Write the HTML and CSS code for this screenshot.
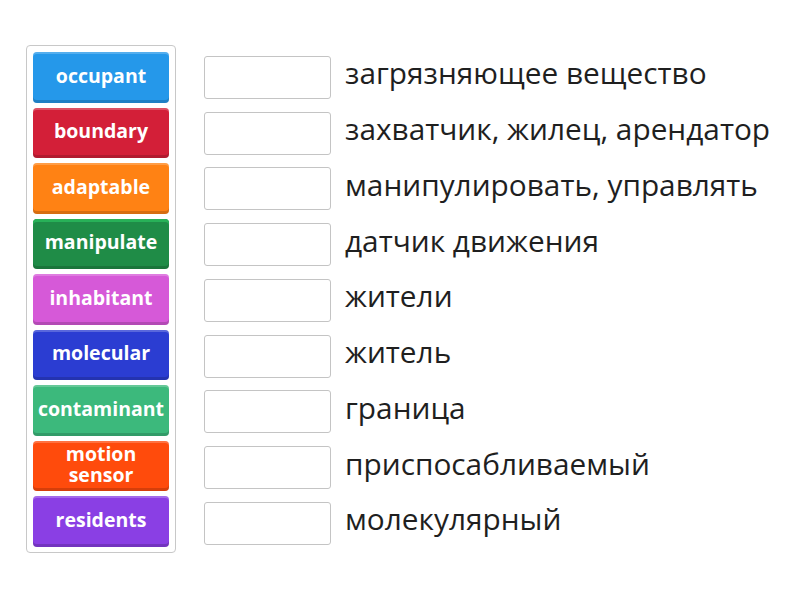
FILE: index.html
```html
<!DOCTYPE html>
<html lang="ru">
<head>
<meta charset="utf-8">
<link rel="stylesheet" href="styles.css">
</head>
<body>
<div class="game">
  <div class="bank">
    <div class="tile t-blue">occupant</div>
    <div class="tile t-red">boundary</div>
    <div class="tile t-orange">adaptable</div>
    <div class="tile t-green">manipulate</div>
    <div class="tile t-pink">inhabitant</div>
    <div class="tile t-indigo">molecular</div>
    <div class="tile t-mint">contaminant</div>
    <div class="tile t-flame"><span class="ln">motion</span><span class="ln">sensor</span></div>
    <div class="tile t-purple">residents</div>
  </div>
  <div class="targets">
    <div class="row"><div class="slot"></div><span class="def">загрязняющее вещество</span></div>
    <div class="row"><div class="slot"></div><span class="def">захватчик, жилец, арендатор</span></div>
    <div class="row"><div class="slot"></div><span class="def">манипулировать, управлять</span></div>
    <div class="row"><div class="slot"></div><span class="def">датчик движения</span></div>
    <div class="row"><div class="slot"></div><span class="def">жители</span></div>
    <div class="row"><div class="slot"></div><span class="def">житель</span></div>
    <div class="row"><div class="slot"></div><span class="def">граница</span></div>
    <div class="row"><div class="slot"></div><span class="def">приспосабливаемый</span></div>
    <div class="row"><div class="slot"></div><span class="def">молекулярный</span></div>
  </div>
</div>
</body>
</html>
```
FILE: styles.css
```css
html, body {
  margin: 0;
  padding: 0;
  background: #fff;
}
body {
  font-family: "Open Sans", "Noto Sans", sans-serif;
  width: 800px;
  height: 600px;
  overflow: hidden;
}
.game {
  display: flex;
  align-items: flex-start;
  padding: 45px 0 0 26px;
}
.bank {
  width: 136px;
  padding: 6px 6px 5px 6px;
  border: 1px solid #c8c8c8;
  border-radius: 4px;
  display: flex;
  flex-direction: column;
  gap: 5px;
}
.tile {
  height: 50.75px;
  border-radius: 4px;
  display: flex;
  flex-direction: column;
  align-items: center;
  justify-content: center;
  text-align: center;
  color: #fff;
  font-weight: 700;
  font-size: 19.5px;
  line-height: 22px;
  padding-bottom: 3px;
  box-sizing: border-box;
  box-shadow: inset 0 2px 0 rgba(255,255,255,0.22), inset 0 -3px 0 rgba(0,0,0,0.16);
  margin-bottom: -0.25px;
}
.ln {
  display: block;
  line-height: 21.5px;
}
.t-blue { background: #2598ea; }
.t-red { background: #d31f38; }
.t-orange { background: #ff8214; }
.t-green { background: #1f8c47; box-shadow: inset 0 3px 0 #28b158, inset 0 -3px 0 rgba(0,0,0,0.16); }
.t-pink { background: #d659d8; }
.t-indigo { background: #2b3dd2; }
.t-mint { background: #3cb97c; }
.t-flame { background: #ff4b0c; }
.t-purple { background: #8a3fe4; }

.targets {
  margin-left: 28px;
  padding-top: 7px;
  display: flex;
  flex-direction: column;
  gap: 5px;
}
.row {
  height: 50.75px;
  display: flex;
  align-items: center;
}
.slot {
  width: 125px;
  height: 41px;
  border: 1px solid #c4c4c4;
  border-radius: 3px;
  flex: none;
}
.def {
  margin-left: 14px;
  font-size: 29.8px;
  line-height: 36px;
  padding-bottom: 8px;
  color: #1f1f1f;
  white-space: nowrap;
}
```
